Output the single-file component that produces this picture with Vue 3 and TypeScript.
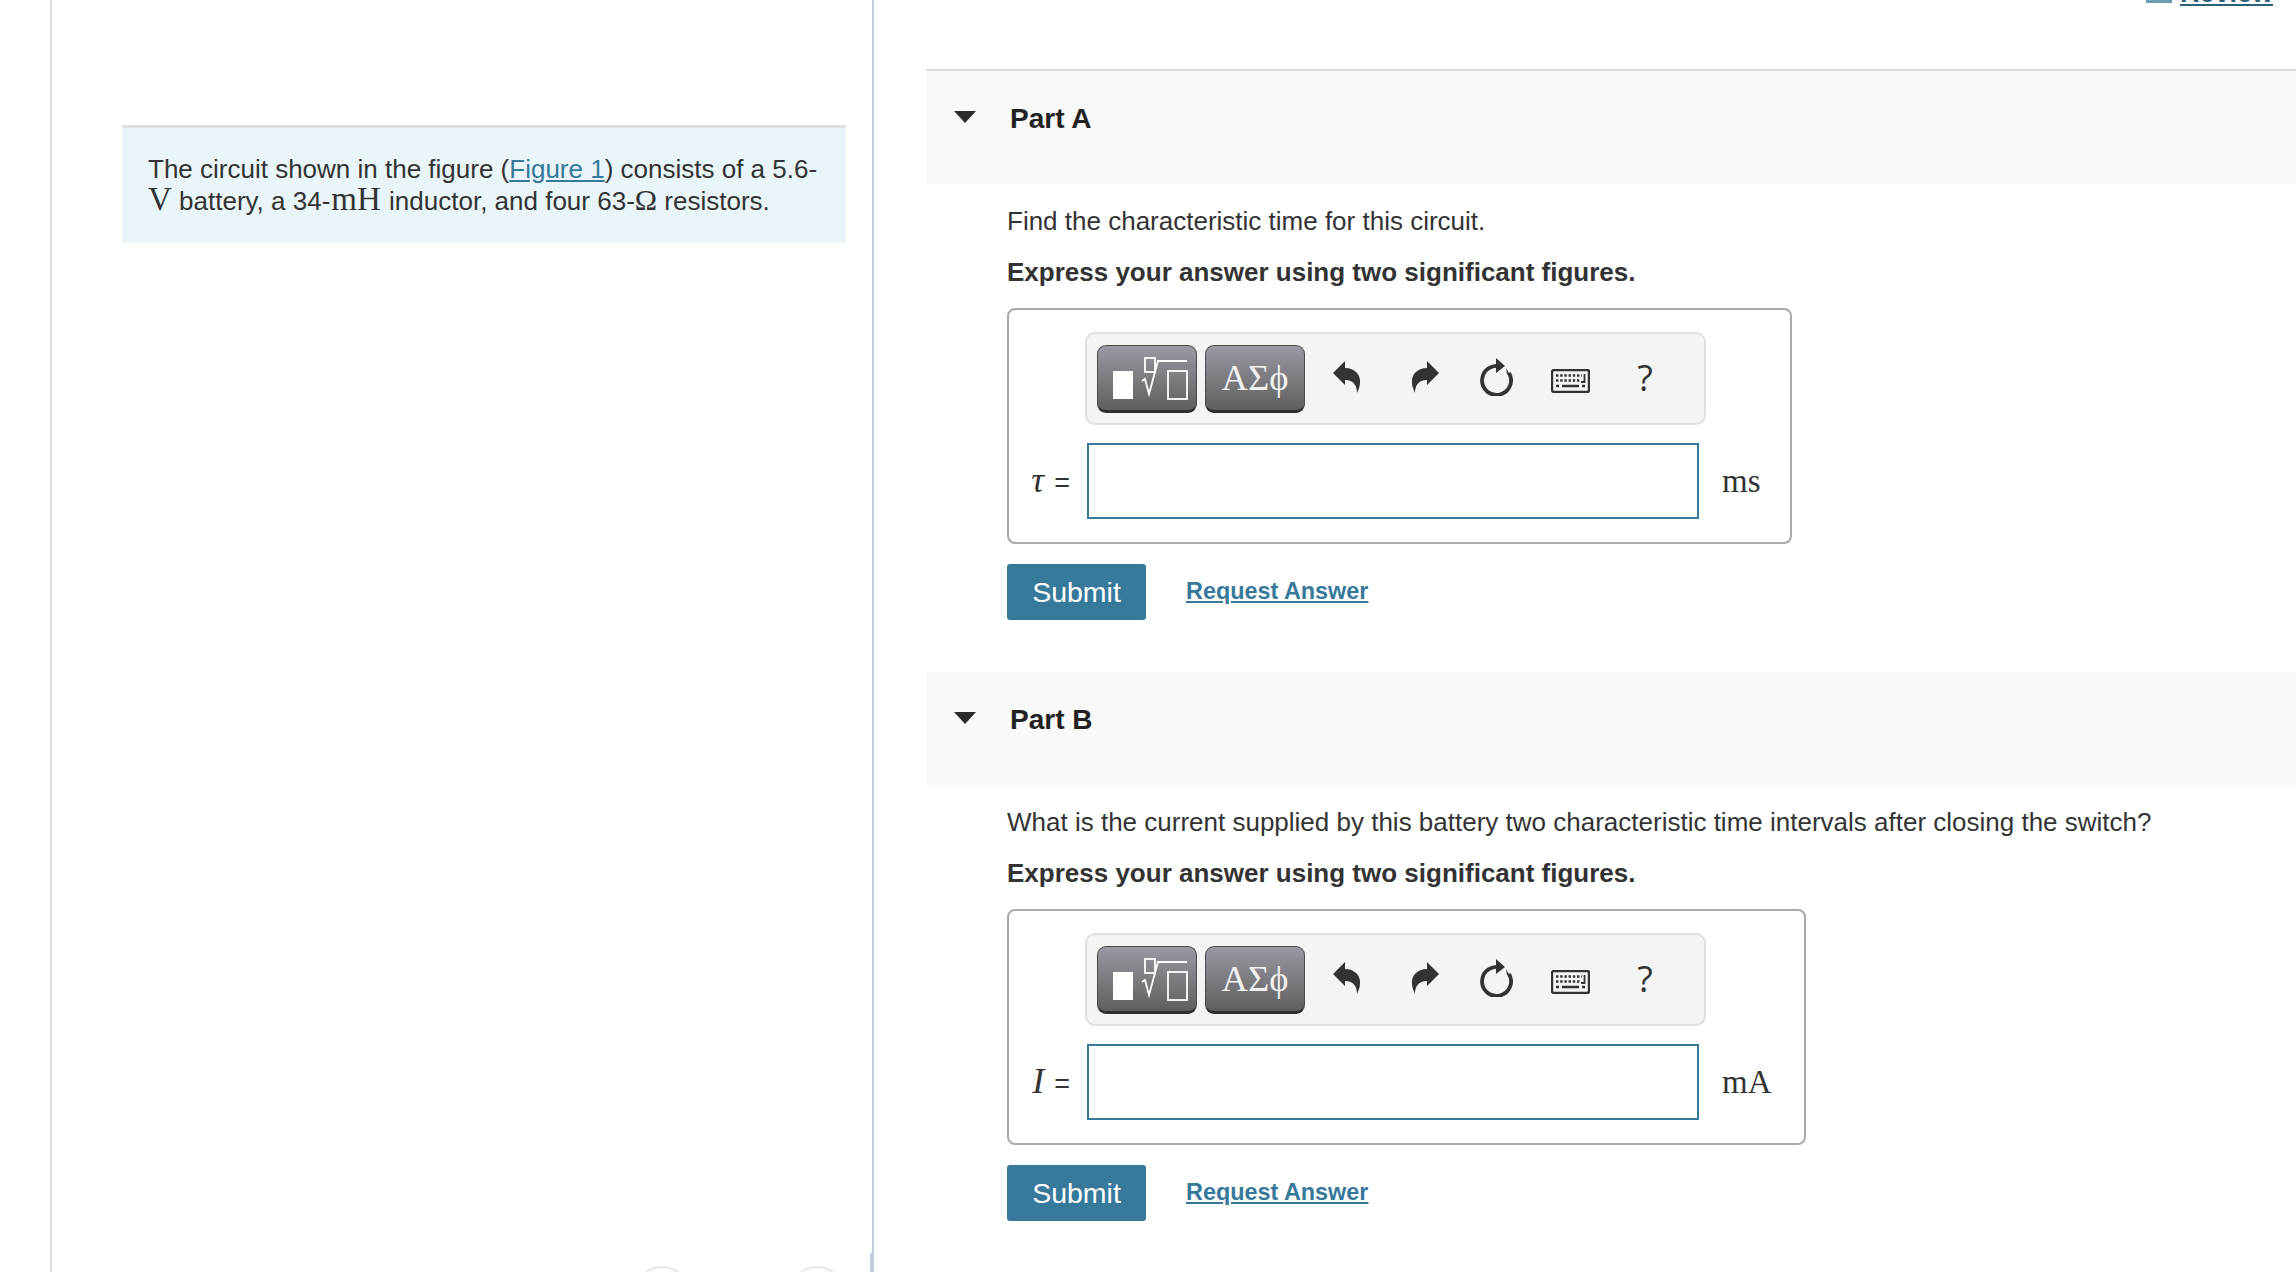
<template>
  <div class="page">
    <aside class="intro-col">
      <div class="intro">
        The circuit shown in the figure (<a class="link" href="#">Figure 1</a>) consists of a 5.6-<span class="math">V</span> battery, a 34-<span class="math unit-mh">mH</span> inductor, and four 63-<span class="math omega">Ω</span> resistors.
      </div>
      <div class="pager">
        <span class="pager-btn"></span>
        <span class="pager-btn"></span>
      </div>
      <span class="scroll-thumb"></span>
    </aside>

    <main class="parts-col">
      <div class="review-row">
        <svg class="review-icon" width="26" height="4" viewBox="0 0 26 4"><rect width="26" height="3" fill="#6d9bb0" /></svg>
        <a class="review-link" href="#">Review</a>
      </div>

      <section v-for="part in parts" :key="part.title" class="part">
        <header class="part-header">
          <span class="caret"></span>
          <h2 class="part-title">{{ part.title }}</h2>
        </header>
        <div class="part-body">
          <p class="question">{{ part.question }}</p>
          <p class="instruction">Express your answer using two significant figures.</p>

          <div class="answer-box" :style="{ width: part.boxWidth + 'px' }">
            <div class="toolbar">
              <button class="tool-btn">
                <svg width="100" height="64" viewBox="0 0 100 64" fill="none" stroke="#fff" stroke-width="1.8">
                  <rect x="15" y="25" width="20" height="28" fill="#fff" stroke="none" />
                  <rect x="47" y="12" width="10" height="14" />
                  <rect x="70" y="25" width="19" height="28" />
                  <path d="M44 35 L47 33 L51 48 L60 15 H89" />
                </svg>
              </button>
              <button class="tool-btn greek">ΑΣϕ</button>
              <span class="tool-slot undo">
                <svg width="28" height="32" viewBox="0 0 28 32"><path :d="arrowPath" fill="#333" /></svg>
              </span>
              <span class="tool-slot redo">
                <svg class="flip" width="28" height="32" viewBox="0 0 28 32"><path :d="arrowPath" fill="#333" /></svg>
              </span>
              <span class="tool-slot reset">
                <svg width="34" height="38" viewBox="0 0 34 38" fill="none">
                  <path d="M23 9 A14.5 14.5 0 1 0 30 15" stroke="#333" stroke-width="3.8" />
                  <path d="M17 0 L26 8 L17 15 Z" fill="#333" />
                  <path d="M27 10 L31 17 L28 16 Z" fill="#333" />
                </svg>
              </span>
              <span class="tool-slot keyboard">
                <svg width="39" height="24" viewBox="0 0 39 24" fill="none">
                  <rect x="1" y="1" width="37" height="22" rx="2" stroke="#333" stroke-width="2.4" fill="#f4f4f4" />
                  <path d="M5 6.5 H31 M5 11.5 H29" stroke="#333" stroke-width="2.4" stroke-dasharray="2.4 1.8" />
                  <path d="M5 17 H8 M11 17 H28 M31 17 H34" stroke="#333" stroke-width="2.4" />
                  <path d="M33.5 5 V13 H30" stroke="#333" stroke-width="1.8" />
                </svg>
              </span>
              <span class="tool-slot help">?</span>
            </div>

            <label class="answer-label"><i class="math">{{ part.symbol }}</i>=</label>
            <input class="answer-input" type="text" />
            <span class="answer-unit math">{{ part.unit }}</span>
          </div>

          <div class="actions">
            <button class="submit-btn">Submit</button>
            <a class="request-link" href="#">Request Answer</a>
          </div>
        </div>
      </section>
    </main>
  </div>
</template>

<script setup lang="ts">
interface Part {
  title: string
  question: string
  symbol: string
  unit: string
  boxWidth: number
}

const arrowPath = 'M0 12 L12 0 V7 C22 7 28 14 27 22 C27 26 25 29 24 32 C24 25 21 19 12 19 V24 Z'

const parts: Part[] = [
  {
    title: 'Part A',
    question: 'Find the characteristic time for this circuit.',
    symbol: 'τ',
    unit: 'ms',
    boxWidth: 785
  },
  {
    title: 'Part B',
    question: 'What is the current supplied by this battery two characteristic time intervals after closing the switch?',
    symbol: 'I',
    unit: 'mA',
    boxWidth: 799
  }
]
</script>

<style>
html,
body {
  margin: 0;
  background: #fff;
}
</style>

<style scoped>
.page {
  display: flex;
  height: 1272px;
  overflow: hidden;
  background: #fff;
  color: #333;
  font-family: "Liberation Sans", Arial, sans-serif;
  font-size: 26px;
  line-height: 32px;
}

.math {
  font-family: "Liberation Serif", "Times New Roman", serif;
}

.link {
  color: #37799b;
  text-decoration: underline;
}

/* left column */
.intro-col {
  position: relative;
  display: flex;
  flex-direction: column;
  box-sizing: border-box;
  flex: 0 0 824px;
  margin-left: 50px;
  padding: 125px 26px 0 70px;
  border-left: 2px solid #ddd;
  border-right: 2px solid #bfcde0;
}

.intro {
  padding: 25px 26px 26px;
  border-top: 3px solid #e0e0e0;
  background: #e9f5f8;
}

.intro .math {
  font-size: 33px;
  line-height: 0;
}

.intro .unit-mh {
  margin-left: 1px;
  margin-right: 1px;
}

.intro .omega {
  font-size: 30px;
}

.pager {
  display: flex;
  gap: 99px;
  height: 6px;
  margin-top: auto;
  margin-left: 512px;
}

.pager-btn {
  flex: none;
  box-sizing: border-box;
  width: 56px;
  height: 56px;
  border: 2px solid #e5e5e5;
  border-radius: 50%;
}

.scroll-thumb {
  position: absolute;
  right: -2px;
  bottom: 0;
  width: 4px;
  height: 19px;
  background: #bfcde0;
}

/* right column */
.parts-col {
  flex: 1;
  padding-left: 52px;
}

.review-row {
  display: flex;
  justify-content: flex-end;
  align-items: flex-start;
  gap: 8px;
  height: 69px;
  padding-right: 23px;
}

.review-icon {
  display: block;
}

.review-link {
  margin-top: -23px;
  color: #2a6377;
  font-size: 27px;
  font-weight: 700;
  text-decoration: underline;
}

.part-header {
  display: flex;
  align-items: flex-start;
  box-sizing: border-box;
  height: 113px;
  padding-top: 32px;
  background: #f9f9f9;
}

.part:first-of-type .part-header {
  height: 115px;
  border-top: 2px solid #ddd;
}

.part:first-of-type {
  margin-bottom: 52px;
}

.caret {
  flex: none;
  width: 0;
  height: 0;
  margin: 8px 34px 0 28px;
  border-style: solid;
  border-width: 12px 11px 0;
  border-color: #2b2b2b transparent transparent;
}

.part-title {
  margin: 0;
  font-size: 28px;
  line-height: 32px;
  font-weight: 700;
  color: #222;
}

.part-body {
  padding-left: 81px;
}

.question {
  margin: 21px 0 0;
}

.instruction {
  margin: 19px 0 0;
  font-weight: 700;
}

.answer-box {
  display: grid;
  grid-template-columns: 78px 612px auto;
  row-gap: 18px;
  align-content: start;
  align-items: center;
  box-sizing: border-box;
  height: 236px;
  margin-top: 20px;
  padding-top: 22px;
  border: 2px solid #aaa;
  border-radius: 8px;
}

.toolbar {
  grid-column: 2 / 4;
  display: flex;
  align-items: center;
  box-sizing: border-box;
  width: 621px;
  height: 93px;
  margin-left: -2px;
  padding-left: 10px;
  border: 2px solid #e0e0e0;
  border-radius: 10px;
  background: #f4f4f4;
}

.tool-btn {
  flex: none;
  box-sizing: border-box;
  width: 100px;
  height: 68px;
  margin-right: 8px;
  padding: 0;
  border: 1px solid #4b4b4b;
  border-bottom: 3px solid #2e2e2e;
  border-radius: 9px;
  background: linear-gradient(#9a98a2, #5f5f5f);
}

.tool-btn svg {
  display: block;
}

.greek {
  margin-right: 4px;
  color: #f0f0f0;
  font-family: "Liberation Serif", "Times New Roman", serif;
  font-size: 36.5px;
  line-height: 58px;
}

.tool-slot {
  flex: none;
  display: flex;
  justify-content: center;
}

.undo,
.redo {
  margin-top: -3px;
}

.undo {
  width: 76px;
}

.redo {
  width: 80px;
}

.reset {
  width: 62px;
  margin-top: -3px;
}

.keyboard {
  width: 86px;
  margin-top: 5px;
}

.flip {
  transform: scaleX(-1);
}

.help {
  width: 64px;
  margin-top: -2px;
  font-family: "Open Sans", "Liberation Sans", sans-serif;
  font-size: 36px;
  font-weight: 400;
  color: #333;
}

.answer-label {
  padding-right: 17px;
  text-align: right;
  font-size: 27px;
}

.answer-label i {
  margin-right: 10px;
  font-size: 36px;
}

.answer-input {
  box-sizing: border-box;
  width: 612px;
  height: 76px;
  border: 2px solid #37799b;
  border-radius: 0;
  background: #fff;
  outline: none;
}

.answer-unit {
  padding-left: 23px;
  font-size: 33px;
}

.actions {
  display: flex;
  align-items: center;
  gap: 40px;
  margin-top: 20px;
}

.submit-btn {
  box-sizing: border-box;
  width: 139px;
  height: 56px;
  padding: 0;
  border: none;
  border-radius: 3px;
  background: #37799b;
  color: #fff;
  font-family: inherit;
  font-size: 28.5px;
}

.request-link {
  margin-bottom: 2px;
  color: #37799b;
  font-size: 23.4px;
  font-weight: 700;
  text-decoration: underline;
}
</style>
